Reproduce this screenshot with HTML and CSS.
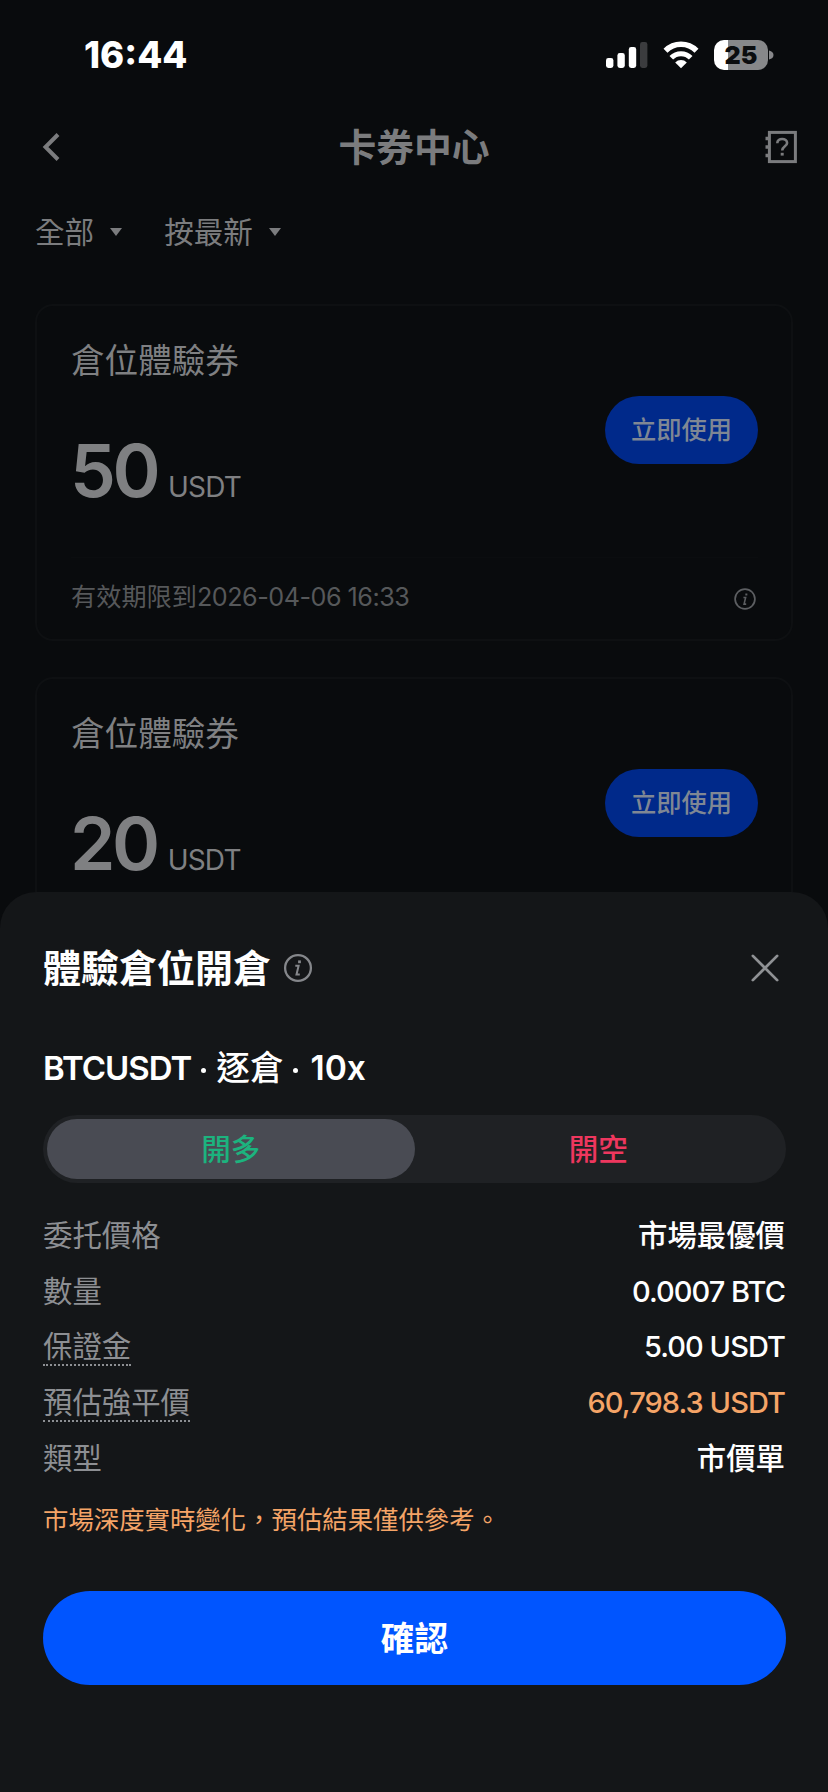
FILE: index.html
```html
<!DOCTYPE html>
<html lang="zh-Hant">
<head>
<meta charset="utf-8">
<title>卡券中心</title>
<link rel="stylesheet" href="styles.css">
</head>
<body>
<div class="screen">
  <header class="status-bar">
    <span class="clock">16:44</span>
    <div class="status-icons">
      <svg class="signal" width="42" height="28" viewBox="0 0 42 28">
        <rect x="0" y="17" width="7.4" height="10" rx="2.4" fill="#fff"/>
        <rect x="11.4" y="12" width="7.4" height="15" rx="2.4" fill="#fff"/>
        <rect x="22.8" y="6" width="7.4" height="21" rx="2.4" fill="#fff"/>
        <rect x="34" y="1" width="7.4" height="26" rx="2.4" fill="#3b3c3e"/>
      </svg>
      <svg class="wifi" width="36" height="28" viewBox="0 0 36 28">
        <path d="M2.500 9.700A22 22 0 0 1 33.500 9.700" fill="none" stroke="#fff" stroke-width="5.600"/>
        <path d="M8.300 16.800A13.500 13.500 0 0 1 27.700 16.800" fill="none" stroke="#fff" stroke-width="5"/>
        <path d="M18 27.200L12.200 21.400A8.500 8.500 0 0 1 23.800 21.400Z" fill="#fff"/>
      </svg>
      <div class="battery"><span>25</span></div>
      <svg class="battery-cap" width="5" height="10" viewBox="0 0 5 10"><path d="M0 0.500Q4.500 1.500 4.500 5T0 9.500Z" fill="#87888a"/></svg>
    </div>
  </header>

  <nav class="nav-bar">
    <svg width="22" height="30" viewBox="0 0 22 30"><path d="M16 2.500L3.500 15L16 27.500" fill="none" stroke="#7b7c7e" stroke-width="4"/></svg>
    <h1>卡券中心</h1>
    <svg width="34" height="34" viewBox="0 0 34 34" fill="none" stroke="#7b7c7e">
      <rect x="5.400" y="2.400" width="26" height="29.200" stroke-width="3"/>
      <path d="M1.500 8.500H5M1.500 17H5M1.500 25.500H5" stroke-width="3.400"/>
      <path d="M13.300 13.300C13.300 10.400 15.500 9 18.200 9S23.100 10.600 23.100 13C23.100 16.300 18.200 16.300 18.200 20.500" stroke-width="2.600"/>
      <path d="M18.200 22.800V25.600" stroke-width="3"/>
    </svg>
  </nav>

  <div class="filters">
    <div class="filter">全部<i class="caret"></i></div>
    <div class="filter">按最新<i class="caret"></i></div>
  </div>

  <main class="coupons">
    <section class="coupon">
      <div class="coupon-main">
        <div>
          <h2>倉位體驗券</h2>
          <p class="amount"><b>50</b><span>USDT</span></p>
        </div>
        <button class="use">立即使用</button>
      </div>
      <div class="coupon-foot">
        <span>有效期限到<em>2026-04-06 16:33</em></span>
        <svg width="22" height="22" viewBox="0 0 28 28" fill="none" stroke="#5c5e61"><circle cx="14" cy="14" r="12.600" stroke-width="2.200"/><path d="M12 12H14.800L12.800 20.500H15.500" stroke-width="2"/><path d="M15.700 7V9.500" stroke-width="2.600"/></svg>
      </div>
    </section>
    <section class="coupon">
      <div class="coupon-main">
        <div>
          <h2>倉位體驗券</h2>
          <p class="amount"><b>20</b><span>USDT</span></p>
        </div>
        <button class="use">立即使用</button>
      </div>
    </section>
  </main>

  <section class="sheet">
    <div class="sheet-head">
      <h2>體驗倉位開倉</h2>
      <svg width="30" height="30" viewBox="0 0 30 30" fill="none" stroke="#85878b"><circle cx="15" cy="15" r="12.900" stroke-width="2.300"/><path d="M12.300 12.700H15.600L13.500 21.500H16.800" stroke-width="2"/><path d="M16.500 7.400V10.200" stroke-width="2.800"/></svg>
      <svg class="close" width="28" height="28" viewBox="0 0 30 30"><path d="M2 2L28 28M28 2L2 28" stroke="#8f9194" stroke-width="3" stroke-linecap="round"/></svg>
    </div>
    <p class="pair"><span class="sym">BTCUSDT</span><i class="dot"></i><span>逐倉</span><i class="dot"></i><span class="lev">10x</span></p>
    <div class="segment">
      <button class="long active">開多</button>
      <button class="short">開空</button>
    </div>
    <dl class="details">
      <div><dt>委托價格</dt><dd>市場最優價</dd></div>
      <div><dt>數量</dt><dd class="num">0.0007 BTC</dd></div>
      <div><dt><span class="hint">保證金</span></dt><dd class="num">5.00 USDT</dd></div>
      <div><dt><span class="hint">預估強平價</span></dt><dd class="num warn">60,798.3 USDT</dd></div>
      <div><dt>類型</dt><dd>市價單</dd></div>
    </dl>
    <p class="note">市場深度實時變化，預估結果僅供參考。</p>
    <button class="confirm">確認</button>
  </section>
</div>
</body>
</html>
```
FILE: styles.css
```css
* { box-sizing: border-box; margin: 0; padding: 0; }
body {
  background: #090b0d;
  color: #fff;
  font-family: Inter, "Noto Sans CJK TC", sans-serif;
}
button { border: 0; font: inherit; }
i, em { font-style: normal; }
svg { display: block; flex: none; }
.screen { position: relative; width: 828px; height: 1792px; overflow: hidden; }

.status-bar {
  height: 110px;
  padding: 0 54px 0 84px;
  display: flex;
  align-items: center;
  justify-content: space-between;
}
.clock { font-size: 36.500px; font-weight: 800; line-height: 40px; }
.status-icons { display: flex; align-items: center; }
.wifi { margin: 0 15px; }
.battery {
  width: 54px;
  height: 30px;
  border-radius: 10px;
  background: linear-gradient(90deg, #fff 14px, #87888a 14px);
  color: #0b0d0f;
  font-size: 25px;
  font-weight: 900;
  line-height: 31px;
  text-align: center;
}
.battery-cap { margin-left: 1px; }

.nav-bar {
  height: 74px;
  padding: 0 30px 0 42px;
  display: flex;
  align-items: center;
  justify-content: space-between;
  color: #7b7c7e;
}
.nav-bar h1 { font-size: 37.800px; font-weight: 700; line-height: 50px; }

.filters {
  height: 96px;
  padding-left: 35px;
  display: flex;
  align-items: center;
  gap: 42px;
  color: #7b7c7e;
  font-size: 29.600px;
}
.filter { display: flex; align-items: center; gap: 16px; font-weight: 400; line-height: 40px; }
.caret { border: solid transparent; border-width: 8px 6px 0; border-top-color: #7b7c7e; }

.coupons { padding: 24px 35px 0; display: flex; flex-direction: column; gap: 36px; }
.coupon {
  height: 337px;
  padding: 0 33px 0 34px;
  border: 2px solid #0e1012;
  border-radius: 18px;
  color: #7f8082;
}
.coupon-main {
  height: 252px;
  padding-top: 31px;
  display: flex;
  align-items: flex-start;
  justify-content: space-between;
  border-bottom: 1px solid #0b0d0f;
}
.coupon h2 { font-size: 33.600px; font-weight: 400; line-height: 48px; }
.amount { display: flex; align-items: baseline; gap: 11px; margin: 41px 0 0 -1px; line-height: 90px; }
.amount b { font-size: 73px; font-weight: 600; letter-spacing: -3.500px; }
.amount span { font-size: 28px; font-weight: 400; letter-spacing: -0.800px; }
.use {
  width: 153px;
  height: 68px;
  margin-top: 59px;
  padding-bottom: 4px;
  border-radius: 34px;
  background: #00298a;
  color: #7f8794;
  font-size: 25.300px;
  font-weight: 500;
}
.coupon-foot {
  height: 82px;
  padding-right: 2px;
  display: flex;
  align-items: center;
  justify-content: space-between;
  color: #56585a;
  font-size: 25.200px;
  font-weight: 400;
}
.coupon-foot span { margin-bottom: 8px; }
.coupon-foot em { letter-spacing: -0.500px; }

.sheet {
  position: absolute;
  top: 892px;
  left: 0;
  width: 828px;
  height: 900px;
  padding: 46px 42px 0 43px;
  border-radius: 36px 36px 0 0;
  background: #141618;
}
.sheet-head { height: 60px; display: flex; align-items: center; gap: 12px; }
.sheet-head h2 { font-size: 38px; font-weight: 700; line-height: 56px; }
.close { margin-left: auto; margin-right: 7px; }
.pair {
  height: 48px;
  margin-top: 46px;
  display: flex;
  align-items: center;
  gap: 10px;
  font-size: 33.600px;
  font-weight: 500;
  line-height: 48px;
}
.sym { font-weight: 600; font-size: 33px; letter-spacing: -1px; }
.lev { margin-left: 2px; font-weight: 600; font-size: 33.600px; }
.dot { width: 5px; height: 5px; margin-top: 5px; border-radius: 3px; background: #fff; }
.segment {
  height: 68px;
  margin-top: 23px;
  padding: 4px;
  display: flex;
  border-radius: 34px;
  background: #1f2124;
}
.segment button { flex: 1; padding-bottom: 3px; border-radius: 30px; background: none; font-size: 29.600px; font-weight: 500; }
.segment .active { background: #494b53; }
.segment .long { color: #1cb37e; }
.segment .short { color: #ee375e; }
.details { margin-top: 25px; padding-right: 1px; }
.details div { height: 55.800px; display: flex; align-items: center; justify-content: space-between; font-size: 29.400px; line-height: 40px; }
dt { color: #8d8f93; font-weight: 400; }
dd { font-weight: 500; }
.num { font-size: 29px; letter-spacing: -0.950px; }
.warn { color: #f5a467; }
.hint { display: block; height: 38px; line-height: 37px; border-bottom: 2px dotted #8d8f93; }
.note { margin-top: 13px; color: #f5a467; font-size: 25.400px; font-weight: 400; line-height: 40px; }
.confirm {
  display: block;
  width: 743px;
  height: 94px;
  margin-top: 51px;
  padding-bottom: 3px;
  border-radius: 47px;
  background: #0055ff;
  color: #fff;
  font-size: 33.700px;
  font-weight: 700;
}
```
